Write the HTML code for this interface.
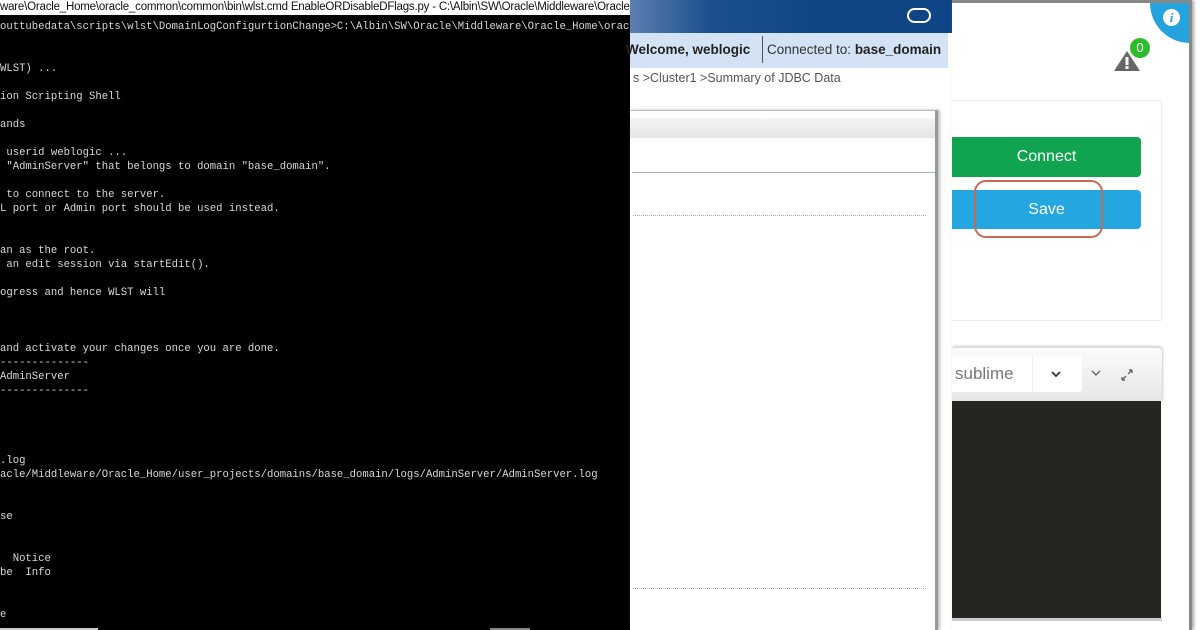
<!DOCTYPE html>
<html><head><style>
*{margin:0;padding:0;box-sizing:border-box}
body{width:1200px;height:630px;overflow:hidden;position:relative;background:#fff;font-family:"Liberation Sans",sans-serif}
.abs{position:absolute}
#con{left:0;top:0;width:630px;height:630px;background:#000;overflow:hidden}
#title{left:0;top:0;width:630px;height:15px;background:#fff;font-size:11.5px;color:#111;white-space:nowrap;line-height:15px;letter-spacing:-0.2px}
pre{position:absolute;left:0;top:20px;font-family:"Liberation Mono",monospace;font-size:10.6px;line-height:14px;color:#d8d8d8;white-space:pre}
</style></head><body>
<div id="con" class="abs">
<div id="title" class="abs">ware\Oracle_Home\oracle_common\common\bin\wlst.cmd  EnableORDisableDFlags.py - C:\Albin\SW\Oracle\Middleware\Oracle_Home\o</div>
<pre>outtubedata\scripts\wlst\DomainLogConfigurtionChange>C:\Albin\SW\Oracle\Middleware\Oracle_Home\orac


WLST) ...

ion Scripting Shell

ands

 userid weblogic ...
 "AdminServer" that belongs to domain "base_domain".

 to connect to the server.
L port or Admin port should be used instead.


an as the root.
 an edit session via startEdit().

ogress and hence WLST will



and activate your changes once you are done.
--------------
AdminServer
--------------




.log
acle/Middleware/Oracle_Home/user_projects/domains/base_domain/logs/AdminServer/AdminServer.log


se


  Notice
be  Info


e</pre>
<div class="abs" style="left:0;top:628px;width:98px;height:2px;background:#ccc"></div>
<div class="abs" style="left:490px;top:628px;width:40px;height:2px;background:#888"></div>
</div>

<!-- middle -->
<div class="abs" style="left:630px;top:0;width:322px;height:33px;background:linear-gradient(90deg,#5a7fb0 0%,#1d4f8f 25%,#0f4585 60%,#0f4585 100%)"></div>
<div class="abs" style="left:907px;top:8px;width:24px;height:15px;border:2.5px solid #fff;border-radius:8px"></div>
<div class="abs" style="left:630px;top:33px;width:318px;height:35px;background:#d3e3f5"></div>
<div class="abs" style="left:626px;top:42px;font-size:13.5px;color:#222;white-space:nowrap"><b>Welcome, weblogic</b></div>
<div class="abs" style="left:762px;top:36px;width:1px;height:27px;background:#555"></div>
<div class="abs" style="left:767px;top:42px;font-size:13.5px;color:#333;white-space:nowrap">Connected to: <b style="color:#222">base_domain</b></div>
<div class="abs" style="left:633px;top:71px;font-size:12.5px;color:#555;white-space:nowrap">s &gt;Cluster1 &gt;Summary of JDBC Data</div>
<div class="abs" style="left:630px;top:110px;width:308px;height:520px;border-top:1px solid #bbb;border-right:3px solid #999;box-shadow:2px 0 3px #bbb"></div>
<div class="abs" style="left:630px;top:118px;width:305px;height:20px;background:linear-gradient(#f4f4f4,#e4e4e4)"></div>
<div class="abs" style="left:632px;top:172px;width:303px;height:1px;background:#9fb3cc"></div>
<div class="abs" style="left:633px;top:215px;width:293px;border-top:1px dotted #aaa"></div>
<div class="abs" style="left:633px;top:588px;width:293px;border-top:1px dotted #aaa"></div>

<!-- right -->
<div class="abs" style="left:952px;top:0;width:240px;height:630px;background:#fff;border-top:3px solid #888;border-right:3px solid #888;box-shadow:2px 0 3px #aaa;overflow:hidden">
 <div class="abs" style="left:198px;top:-40px;width:80px;height:80px;border-radius:50%;background:#25a3df"></div>
 <div class="abs" style="left:211px;top:6px;width:17px;height:17px;border-radius:50%;background:#fff;color:#25a3df;font:italic bold 13px 'Liberation Serif',serif;text-align:center;line-height:17px">i</div>
</div>
<svg class="abs" style="left:1114px;top:50px" width="28" height="22"><polygon points="13,1 26,21 0,21" fill="#666"/><rect x="11.5" y="7" width="3" height="8" fill="#fff"/><rect x="11.5" y="16" width="3" height="3" fill="#fff"/></svg>
<div class="abs" style="left:1130px;top:38px;width:20px;height:20px;border-radius:50%;background:#2dbb2d;color:#fff;font-size:13px;text-align:center;line-height:19px">0</div>
<div class="abs" style="left:952px;top:100px;width:210px;height:221px;border:1px solid #eee;border-left:none"></div>
<div class="abs" style="left:952px;top:137px;width:189px;height:40px;background:#10a350;border-radius:0 4px 4px 0;color:#fff;font-size:16px;text-align:center;line-height:40px">Connect</div>
<div class="abs" style="left:952px;top:190px;width:189px;height:39px;background:#24a6e0;border-radius:0 4px 4px 0;color:#fff;font-size:16px;text-align:center;line-height:39px">Save</div>
<div class="abs" style="left:974px;top:180px;width:129px;height:58px;border:2.5px solid #c86a50;border-radius:12px"></div>
<div class="abs" style="left:952px;top:347px;width:210px;height:54px;background:linear-gradient(#fbfbfb,#e6e6e6);border-top:1px solid #ddd;border-radius:0 5px 0 0;box-shadow:1px -1px 2px #ccc"></div>
<div class="abs" style="left:952px;top:355px;width:130px;height:37px;background:#fff;border-radius:0 3px 3px 0"></div>
<div class="abs" style="left:1032px;top:355px;width:1px;height:37px;background:#eee"></div>
<div class="abs" style="left:955px;top:364px;font-size:17px;color:#777">sublime</div>
<svg class="abs" style="left:1050px;top:367px" width="90" height="16"><polyline points="2,5 6,9 10,5" fill="none" stroke="#333" stroke-width="1.8"/><polyline points="42,4 46,8 50,4" fill="none" stroke="#666" stroke-width="1.4"/><path d="M72 13 L76 9 M72 13 L72 10 M72 13 L75 13 M82 3 L78 7 M82 3 L79 3 M82 3 L82 6" stroke="#666" stroke-width="1.4" fill="none"/></svg>
<div class="abs" style="left:952px;top:401px;width:209px;height:217px;background:#252522"></div>
<div class="abs" style="left:952px;top:618px;width:210px;height:3px;background:#ccc"></div>
</body></html>
